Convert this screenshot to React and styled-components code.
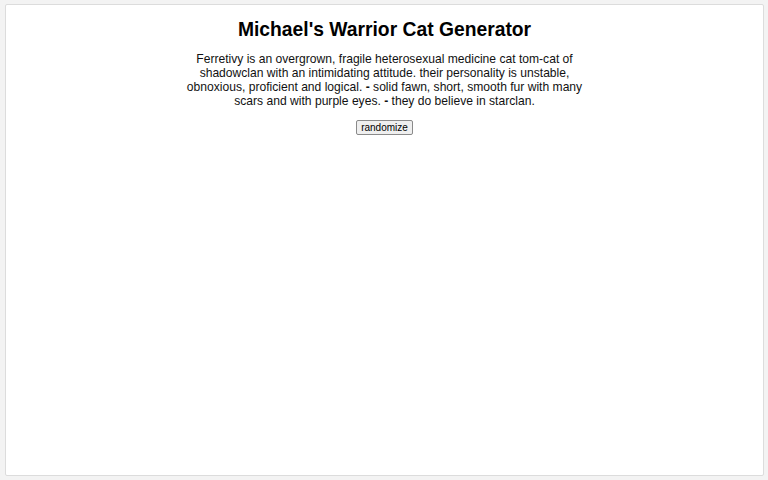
import React from 'react'
import styled, { createGlobalStyle } from 'styled-components'

const GlobalStyle = createGlobalStyle`
  html, body {
    margin: 0;
    padding: 0;
    background: #f3f3f3;
  }
  body {
    font-family: "Liberation Sans", Arial, sans-serif;
    color: #000;
  }
`

const Page = styled.div`
  padding: 4px 4px 4px 5px;
  height: 480px;
  box-sizing: border-box;
`

const Card = styled.main`
  height: 100%;
  box-sizing: border-box;
  background: #fff;
  border: 1px solid #dcdcdc;
  border-radius: 2px;
  display: flex;
  flex-direction: column;
  align-items: center;
  padding-top: 14px;
`

const Title = styled.h1`
  margin: 0;
  font-size: 19.3px;
  font-weight: 700;
  line-height: 22px;
`

const Story = styled.p`
  margin: 11px 0 0;
  width: 400px;
  text-align: center;
  font-size: 12.1px;
  line-height: 14px;
  color: #111;

  b {
    font-weight: 700;
  }
`

const Button = styled.button`
  margin-top: 12px;
  height: 15px;
  box-sizing: border-box;
  font-family: "Liberation Sans", Arial, sans-serif;
  font-size: 10px;
  line-height: 12px;
  padding: 0 4px;
  background: #efefef;
  border: 1px solid #8a8a8a;
  border-radius: 2px;
  color: #000;
`

const App = () => {
  return (
    <>
      <GlobalStyle />
      <Page>
        <Card>
          <Title>Michael's Warrior Cat Generator</Title>
          <Story>
            Ferretivy is an overgrown, fragile heterosexual medicine cat tom-cat of shadowclan
            with an intimidating attitude. their personality is unstable, obnoxious, proficient
            and logical. <b>-</b> solid fawn, short, smooth fur with many scars and with purple
            eyes. <b>-</b> they do believe in starclan.
          </Story>
          <Button>randomize</Button>
        </Card>
      </Page>
    </>
  )
}

export default App
